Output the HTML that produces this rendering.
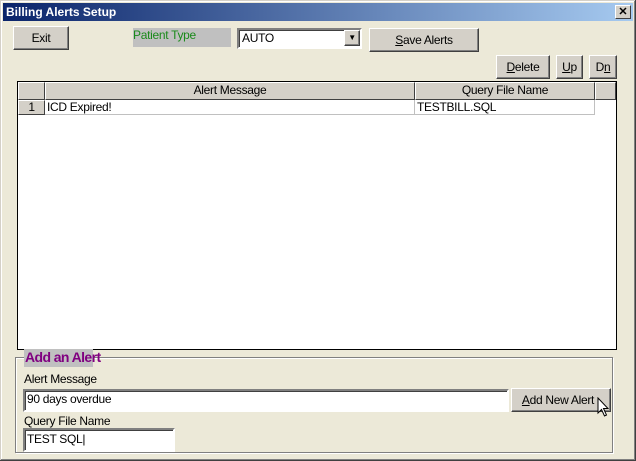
<!DOCTYPE html><html><head><style>
*{box-sizing:border-box;margin:0;padding:0}
body{width:636px;height:461px;overflow:hidden;font-family:"Liberation Sans",Arial,sans-serif;font-size:11px;color:#000;letter-spacing:-0.3px}
.win{position:absolute;left:0;top:0;width:636px;height:461px;background:#ece9d8;box-shadow:inset -1px -1px 0 #404040,inset 1px 1px 0 #d4d0c8,inset -2px -2px 0 #808080,inset 2px 2px 0 #fff}
.title{position:absolute;left:3px;top:3px;width:630px;height:18px;background:linear-gradient(90deg,#0a246a,#a6caf0);color:#fff;font-weight:bold;font-size:12px;padding:2px 0 0 3px;letter-spacing:0}
.x{position:absolute;right:2px;top:2px;width:16px;height:14px;background:#d4d0c8;border:1px solid;border-color:#fff #404040 #404040 #fff;color:#000;font-size:11px;text-align:center;line-height:12px;font-weight:bold}
.a{position:absolute;white-space:nowrap}
.btn{position:absolute;background:#d4d0c8;border:1px solid;border-color:#fff #404040 #404040 #fff;box-shadow:inset -1px -1px 0 #808080;text-align:center;font-size:12px;white-space:nowrap}
.inp{position:absolute;background:#fff;border:2px solid;border-color:#808080 #fff #fff #808080;box-shadow:inset 1px 1px 0 #404040;font-size:12px;padding:1px 2px;white-space:nowrap}
u{text-decoration:underline}
.hd{position:absolute;background:#d4d0c8;border:1px solid;border-color:#fff #404040 #404040 #fff;text-align:center;font-size:12px;line-height:15px}
</style></head><body><div class="win">
<div class="title">Billing Alerts Setup<div class="x">✕</div></div>
<div class="btn" style="left:13px;top:26px;width:56px;height:24px;line-height:22px">Exit</div>
<div class="a" style="left:133px;top:28px;width:98px;height:19px;background:#c0c0c0;color:#1a8a1a;font-size:12px">Patient Type</div>
<div class="inp" style="left:237px;top:28px;width:125px;height:21px;padding:1px 3px;line-height:15px">AUTO</div>
<div class="btn" style="left:344px;top:30px;width:16px;height:16px;font-size:8px;line-height:14px">▼</div>
<div class="btn" style="left:369px;top:28px;width:110px;height:24px;line-height:22px"><u>S</u>ave Alerts</div>
<div class="btn" style="left:496px;top:55px;width:54px;height:24px;line-height:22px"><u>D</u>elete</div>
<div class="btn" style="left:556px;top:55px;width:27px;height:24px;line-height:22px"><u>U</u>p</div>
<div class="btn" style="left:589px;top:55px;width:28px;height:24px;line-height:22px">D<u>n</u></div>
<div class="a" style="left:17px;top:81px;width:600px;height:269px;background:#fff;border:1px solid #000"></div>
<div class="hd" style="left:18px;top:82px;width:27px;height:18px"></div>
<div class="hd" style="left:45px;top:82px;width:370px;height:18px">Alert Message</div>
<div class="hd" style="left:415px;top:82px;width:180px;height:18px">Query File Name</div>
<div class="hd" style="left:595px;top:82px;width:21px;height:18px"></div>
<div class="hd" style="left:18px;top:100px;width:27px;height:15px;line-height:13px">1</div>
<div class="a" style="left:45px;top:100px;width:370px;height:15px;border-right:1px solid #c0c0c0;border-bottom:1px solid #c0c0c0;font-size:12px;padding-left:2px;line-height:14px">ICD Expired!</div>
<div class="a" style="left:415px;top:100px;width:180px;height:15px;border-right:1px solid #c0c0c0;border-bottom:1px solid #c0c0c0;font-size:12px;padding-left:2px;line-height:14px">TESTBILL.SQL</div>
<div class="a" style="left:15px;top:357px;width:598px;height:96px;border:1px solid #808080;box-shadow:1px 1px 0 #fff,inset 1px 1px 0 #fff"></div>
<div class="a" style="left:24px;top:349px;width:69px;height:18px;background:#c0c0c0;color:#800080;font-weight:bold;font-size:14px;line-height:17px;padding-left:1px;letter-spacing:-0.6px">Add an Alert</div>
<div class="a" style="left:24px;top:372px;font-size:12px">Alert Message</div>
<div class="inp" style="left:23px;top:389px;width:486px;height:23px;line-height:15px">90 days overdue</div>
<div class="btn" style="left:511px;top:388px;width:100px;height:24px;line-height:22px;padding-right:6px"><u>A</u>dd New Alert</div>
<svg class="a" style="left:597px;top:397px" width="12" height="20"><path d="M1 1V16L4.5 12.5L7.5 19L9.5 18L6.5 11.5H11Z" fill="#fff" stroke="#000"/></svg>
<div class="a" style="left:24px;top:414px;font-size:12px">Query File Name</div>
<div class="inp" style="left:23px;top:428px;width:152px;height:24px;line-height:16px">TEST SQL|</div>
</div></body></html>
